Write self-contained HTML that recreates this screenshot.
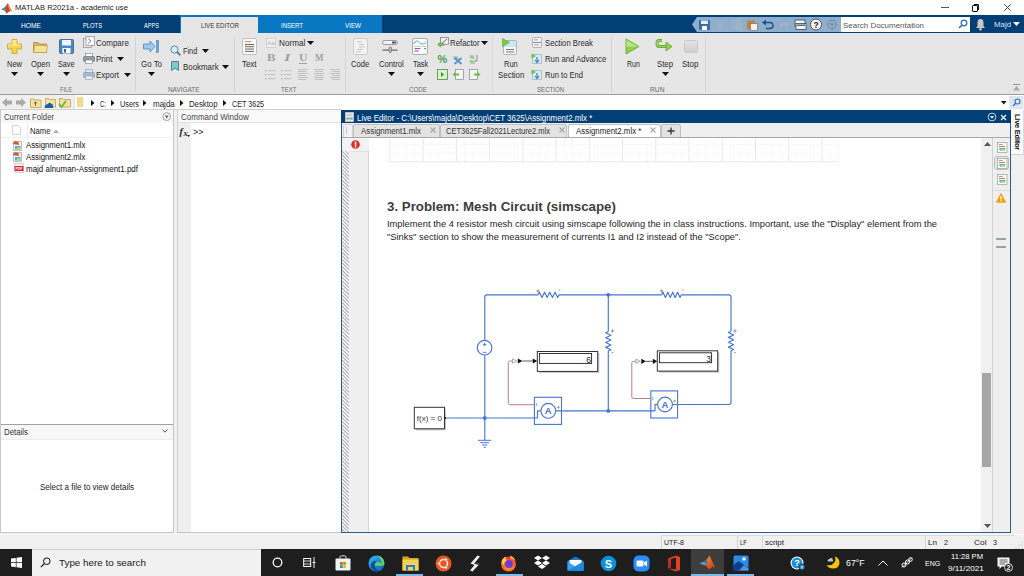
<!DOCTYPE html>
<html><head><meta charset="utf-8">
<style>
*{margin:0;padding:0;box-sizing:border-box}
html,body{width:1024px;height:576px;overflow:hidden;background:#f0f0f0;font-family:"Liberation Sans",sans-serif;color:#222;position:relative}
.a{position:absolute}
.t{position:absolute;white-space:nowrap;line-height:1}
svg{position:absolute;overflow:visible}
</style></head><body>
<!-- sec_top -->
<div class="a" style="left:0px;top:0px;width:1024px;height:15px;background:#fff;"></div>
<svg style="left:1px;top:2px" width="12" height="12" viewBox="0 0 12 12"><path d="M0.5 7.2 L4 5.2 L6.8 1 L11 9.8 L9.2 8.8 L5.5 11.8 L4 8.8 Z" fill="#c8452a"/><path d="M0.5 7.2 L4 5.2 L5.2 7.8 L4 8.8 Z" fill="#3a8fd0"/><path d="M6.8 1 L11 9.8 L9.2 8.8 L7.5 6 Z" fill="#f09a2a"/></svg>
<div class="t" style="left:15.00px;top:3.99px;font-size:7.8px;color:#1a1a1a;font-family:'Liberation Sans',sans-serif;transform:scaleX(0.981);transform-origin:0 0;">MATLAB R2021a - academic use</div>
<div class="a" style="left:941px;top:7px;width:7.5px;height:0.9px;background:#555;"></div>
<div class="a" style="left:972px;top:5.3px;width:6.3px;height:6.3px;border:1.3px solid #111;border-radius:1px"></div>
<div class="a" style="left:973.8px;top:4px;width:5.5px;height:5.8px;border-top:1.2px solid #111;border-right:1.2px solid #111;border-radius:0 1.5px 0 0"></div>
<svg style="left:1003.5px;top:3.8px" width="7" height="7" viewBox="0 0 7 7"><path d="M0.3 0.3 L6.7 6.7 M6.7 0.3 L0.3 6.7" stroke="#333" stroke-width="0.9"/></svg>
<div class="a" style="left:0px;top:15px;width:1024px;height:18px;background:#023f76;"></div>
<div class="a" style="left:259px;top:15px;width:123px;height:18px;background:#0a77c3;"></div>
<div class="a" style="left:180px;top:15px;width:79px;height:18px;background:#0a77c3;"></div>
<div class="a" style="left:181px;top:17px;width:77px;height:16px;background:#e6e6e6;"></div>
<div class="t" style="left:21.00px;top:21.85px;font-size:7px;color:#fff;font-family:'Liberation Sans',sans-serif;transform:scaleX(0.952);transform-origin:0 0;">HOME</div>
<div class="t" style="left:83.00px;top:21.85px;font-size:7px;color:#fff;font-family:'Liberation Sans',sans-serif;transform:scaleX(0.828);transform-origin:0 0;">PLOTS</div>
<div class="t" style="left:144.00px;top:21.85px;font-size:7px;color:#fff;font-family:'Liberation Sans',sans-serif;transform:scaleX(0.803);transform-origin:0 0;">APPS</div>
<div class="t" style="left:201.00px;top:21.85px;font-size:7px;color:#333;font-family:'Liberation Sans',sans-serif;transform:scaleX(0.875);transform-origin:0 0;">LIVE EDITOR</div>
<div class="t" style="left:281.00px;top:21.85px;font-size:7px;color:#fff;font-family:'Liberation Sans',sans-serif;transform:scaleX(0.861);transform-origin:0 0;">INSERT</div>
<div class="t" style="left:345.00px;top:21.85px;font-size:7px;color:#fff;font-family:'Liberation Sans',sans-serif;transform:scaleX(0.894);transform-origin:0 0;">VIEW</div>
<svg style="left:692px;top:17px" width="149" height="15" viewBox="0 0 149 15"><path d="M5 0 H149 V15 H5 L0 7.5 Z" fill="#8eaecb"/>
<rect x="7" y="3" width="11" height="10" rx="1" fill="#3a6ea8"/><rect x="9" y="3.5" width="7" height="3.5" fill="#e8eef5"/><rect x="10" y="9" width="5" height="4" fill="#fff"/>
<path d="M25 3 L29 10 M31 3 L27 10" stroke="#a3b6c8" stroke-width="0.9"/><circle cx="26.5" cy="11.5" r="1.4" fill="none" stroke="#a3b6c8" stroke-width="0.9"/><circle cx="29.5" cy="11.5" r="1.4" fill="none" stroke="#a3b6c8" stroke-width="0.9"/>
<rect x="41" y="3" width="6" height="7" fill="none" stroke="#a3b6c8" stroke-width="0.9"/><rect x="44" y="6" width="6" height="7" fill="#9fb3c6" stroke="#a3b6c8" stroke-width="0.9"/>
<rect x="55" y="3.5" width="8" height="9" fill="#c2843a"/><rect x="58.5" y="6.5" width="7" height="7" fill="#f2f2f2" stroke="#666" stroke-width="0.6"/>
<path d="M73 5.5 H78 Q81 5.5 81 8.5 Q81 11.5 78 11.5 H74" stroke="#1f4f8a" stroke-width="1.4" fill="none"/><path d="M70 5.5 L74 2.5 V8.5 Z" fill="#1f4f8a"/>
<path d="M88 11.5 Q88 7 92 7 H94" stroke="#a3b6c8" stroke-width="1.3" fill="none"/><path d="M97 7 L93.5 4 V10 Z" fill="#a3b6c8"/>
<rect x="103" y="3" width="10" height="6" fill="#f4f4f4" stroke="#444" stroke-width="0.8"/><rect x="104" y="6.5" width="10" height="6" fill="#f4f4f4" stroke="#444" stroke-width="0.8"/><rect x="105" y="7.5" width="8" height="1.5" fill="#3a6ea8"/>
<circle cx="124" cy="7.5" r="5.5" fill="#f4f4f4" stroke="#333" stroke-width="0.8"/><text x="124" y="10.8" font-size="8.5" font-weight="bold" text-anchor="middle" fill="#222" font-family="Liberation Sans">?</text>
<circle cx="140" cy="7.5" r="4.2" fill="none" stroke="#6d8299" stroke-width="1"/><path d="M137.9 6.4 H142.1 L140 8.9 Z" fill="#6d8299"/>
</svg>
<div class="a" style="left:841px;top:17px;width:129px;height:15px;background:#fff;"></div>
<div class="t" style="left:843.00px;top:21.52px;font-size:7.3px;color:#555;font-family:'Liberation Sans',sans-serif;transform:scaleX(1.091);transform-origin:0 0;">Search Documentation</div>
<svg style="left:958px;top:19px" width="10" height="10" viewBox="0 0 10 10"><circle cx="6" cy="4" r="2.8" fill="none" stroke="#2e6cc0" stroke-width="1.3"/><path d="M4 6 L1 9" stroke="#2e6cc0" stroke-width="1.6"/></svg>
<svg style="left:975px;top:18px" width="11" height="13" viewBox="0 0 11 13"><path d="M5.5 1 C3 1 2.5 3 2.5 5 V8 L1 10 H10 L8.5 8 V5 C8.5 3 8 1 5.5 1 Z" fill="#c7c7c7"/><circle cx="5.5" cy="11.3" r="1.3" fill="#c7c7c7"/></svg>
<div class="t" style="left:994.00px;top:20.90px;font-size:8px;color:#d6e4f4;font-family:'Liberation Sans',sans-serif;transform:scaleX(0.980);transform-origin:0 0;">Majd</div>
<svg style="left:1013px;top:22px" width="7" height="5" viewBox="0 0 7 5"><path d="M0 0 H7 L3.5 4 Z" fill="#fff"/></svg>
<!-- sec_ribbon -->
<div class="a" style="left:0px;top:33px;width:1024px;height:61px;background:#e6e6e6;"></div>
<div class="a" style="left:0px;top:94px;width:1024px;height:1px;background:#9c9c9c;"></div>
<svg style="left:7px;top:39px" width="15" height="15" viewBox="0 0 15 15"><path d="M5 0.5 H10 V5 H14.5 V10 H10 V14.5 H5 V10 H0.5 V5 H5 Z" fill="#f5d34a" stroke="#c9a227" stroke-width="0.8"/><path d="M5.5 1 H9.5 V5.5 H14 V7 H1 V5.5 H5.5 Z" fill="#fbe98a"/></svg>
<svg style="left:33px;top:41px" width="15" height="12" viewBox="0 0 15 12"><path d="M0.5 1.5 H5 L6.5 3 H13.5 V11.5 H0.5 Z" fill="#d9b45a" stroke="#a8823a" stroke-width="0.7"/><path d="M1.5 4.5 H14.5 L13.5 11.5 H0.8 Z" fill="#f6e39a" stroke="#b8923a" stroke-width="0.6"/></svg>
<svg style="left:59px;top:39px" width="15" height="15" viewBox="0 0 15 15"><rect x="0.5" y="0.5" width="14" height="14" rx="1" fill="#4c86c4" stroke="#2d5f98" stroke-width="0.8"/><rect x="3" y="1" width="9" height="5.5" fill="#eef4fa"/><rect x="3.5" y="9" width="8" height="5.5" fill="#fff"/><rect x="5" y="10" width="2" height="3.5" fill="#2d5f98"/></svg>
<div class="t" style="left:7.00px;top:59.72px;font-size:8.3px;color:#2b2b2b;font-family:'Liberation Sans',sans-serif;transform:scaleX(0.903);transform-origin:0 0;">New</div>
<div class="t" style="left:31.00px;top:59.72px;font-size:8.3px;color:#2b2b2b;font-family:'Liberation Sans',sans-serif;transform:scaleX(0.936);transform-origin:0 0;">Open</div>
<div class="t" style="left:58.00px;top:59.72px;font-size:8.3px;color:#2b2b2b;font-family:'Liberation Sans',sans-serif;transform:scaleX(0.872);transform-origin:0 0;">Save</div>
<svg style="left:11.1px;top:72.4px" width="7" height="4" viewBox="0 0 7 4"><path d="M0 0 H7 L3.5 4 Z" fill="#111"/></svg>
<svg style="left:37.0px;top:72.4px" width="7" height="4" viewBox="0 0 7 4"><path d="M0 0 H7 L3.5 4 Z" fill="#111"/></svg>
<svg style="left:63.0px;top:72.4px" width="7" height="4" viewBox="0 0 7 4"><path d="M0 0 H7 L3.5 4 Z" fill="#111"/></svg>
<svg style="left:83px;top:36px" width="12" height="12" viewBox="0 0 12 12"><rect x="0.5" y="2.5" width="8" height="9" fill="#e9e9e9" stroke="#8a8a8a" stroke-width="0.7"/><rect x="3" y="0.5" width="8.5" height="9" fill="#f7f7f7" stroke="#8a8a8a" stroke-width="0.7"/><path d="M5 2.5 L8 5 L5 7.5" stroke="#6d6d6d" stroke-width="0.8" fill="none"/></svg>
<svg style="left:83px;top:53px" width="12" height="11" viewBox="0 0 12 11"><rect x="2.5" y="0.5" width="7" height="4" fill="#fff" stroke="#7d7d7d" stroke-width="0.6"/><rect x="0.5" y="3.5" width="11" height="5" rx="1" fill="#8f9aa5" stroke="#5f6a75" stroke-width="0.6"/><rect x="2.5" y="7" width="7" height="3.5" fill="#fff" stroke="#7d7d7d" stroke-width="0.6"/></svg>
<svg style="left:83px;top:69px" width="12" height="11" viewBox="0 0 12 11"><rect x="2.5" y="0.5" width="7" height="4" fill="#dfe8f1" stroke="#8a9fb5" stroke-width="0.6"/><rect x="0.5" y="3.5" width="11" height="5" rx="1" fill="#a9bccd" stroke="#7d93a8" stroke-width="0.6"/><rect x="2.5" y="7" width="7" height="3.5" fill="#e8eef4" stroke="#8a9fb5" stroke-width="0.6"/></svg>
<div class="t" style="left:96.40px;top:38.72px;font-size:8.3px;color:#2b2b2b;font-family:'Liberation Sans',sans-serif;transform:scaleX(0.964);transform-origin:0 0;">Compare</div>
<div class="t" style="left:96.40px;top:54.72px;font-size:8.3px;color:#2b2b2b;font-family:'Liberation Sans',sans-serif;transform:scaleX(0.961);transform-origin:0 0;">Print</div>
<svg style="left:116.5px;top:56.5px" width="7" height="4" viewBox="0 0 7 4"><path d="M0 0 H7 L3.5 4 Z" fill="#111"/></svg>
<div class="t" style="left:96.40px;top:70.72px;font-size:8.3px;color:#2b2b2b;font-family:'Liberation Sans',sans-serif;transform:scaleX(0.959);transform-origin:0 0;">Export</div>
<svg style="left:123.5px;top:72.5px" width="7" height="4" viewBox="0 0 7 4"><path d="M0 0 H7 L3.5 4 Z" fill="#111"/></svg>
<div class="t" style="left:60.00px;top:86.83px;font-size:6.5px;color:#6b6b6b;font-family:'Liberation Sans',sans-serif;transform:scaleX(0.874);transform-origin:0 0;">FILE</div>
<div class="a" style="left:135px;top:36px;width:1px;height:56px;background:#d4d4d4;"></div>
<svg style="left:143px;top:40px" width="17" height="13" viewBox="0 0 17 13"><path d="M0.5 4 H7 V1 L12 6.5 L7 12 V9 H0.5 Z" fill="#9ccbec" stroke="#4a86b8" stroke-width="0.8"/><rect x="13.5" y="0.5" width="2" height="12" fill="#6aa3d3" stroke="#4a86b8" stroke-width="0.6"/></svg>
<div class="t" style="left:141.00px;top:59.72px;font-size:8.3px;color:#2b2b2b;font-family:'Liberation Sans',sans-serif;transform:scaleX(0.955);transform-origin:0 0;">Go To</div>
<svg style="left:148.1px;top:72.4px" width="7" height="4" viewBox="0 0 7 4"><path d="M0 0 H7 L3.5 4 Z" fill="#111"/></svg>
<svg style="left:170px;top:45px" width="11" height="11" viewBox="0 0 11 11"><circle cx="4.5" cy="4.5" r="3.6" fill="#d8ecfa" stroke="#5e87ad" stroke-width="1"/><path d="M7 7 L10.3 10.3" stroke="#3d5f80" stroke-width="1.6"/></svg>
<div class="t" style="left:183.00px;top:47.22px;font-size:8.3px;color:#2b2b2b;font-family:'Liberation Sans',sans-serif;transform:scaleX(0.886);transform-origin:0 0;">Find</div>
<svg style="left:201.5px;top:48.5px" width="7" height="4" viewBox="0 0 7 4"><path d="M0 0 H7 L3.5 4 Z" fill="#111"/></svg>
<svg style="left:171px;top:61px" width="8" height="10" viewBox="0 0 8 10"><path d="M0.5 0.5 H7.5 V9.5 L4 7 L0.5 9.5 Z" fill="#7cc9cf" stroke="#3e6e78" stroke-width="0.8"/></svg>
<div class="t" style="left:183.30px;top:62.92px;font-size:8.3px;color:#2b2b2b;font-family:'Liberation Sans',sans-serif;transform:scaleX(0.953);transform-origin:0 0;">Bookmark</div>
<svg style="left:222.2px;top:64.5px" width="7" height="4" viewBox="0 0 7 4"><path d="M0 0 H7 L3.5 4 Z" fill="#111"/></svg>
<div class="t" style="left:167.60px;top:86.83px;font-size:6.5px;color:#6b6b6b;font-family:'Liberation Sans',sans-serif;transform:scaleX(0.984);transform-origin:0 0;">NAVIGATE</div>
<div class="a" style="left:234px;top:36px;width:1px;height:56px;background:#d4d4d4;"></div>
<svg style="left:242px;top:38px" width="15" height="17" viewBox="0 0 15 17"><rect x="0.5" y="0.5" width="14" height="16" rx="1.5" fill="#fbfbfb" stroke="#b5b5b5" stroke-width="0.8"/><rect x="3" y="3" width="6" height="1.2" fill="#e8906a"/><rect x="3" y="6" width="9" height="0.9" fill="#555"/><rect x="3" y="8.3" width="9" height="0.9" fill="#555"/><rect x="3" y="10.6" width="9" height="0.9" fill="#555"/><rect x="3" y="12.9" width="9" height="0.9" fill="#555"/></svg>
<div class="t" style="left:242.00px;top:59.72px;font-size:8.3px;color:#2b2b2b;font-family:'Liberation Sans',sans-serif;transform:scaleX(0.953);transform-origin:0 0;">Text</div>
<svg style="left:266px;top:38px" width="10" height="10" viewBox="0 0 10 10"><rect x="0.5" y="0.5" width="9" height="9" fill="#f2f2f2" stroke="#c8c8c8" stroke-width="0.7"/><text x="5" y="7.3" font-size="6" text-anchor="middle" fill="#b0b0b0" font-family="Liberation Sans">Aa</text></svg>
<div class="t" style="left:279.00px;top:38.72px;font-size:8.3px;color:#2b2b2b;font-family:'Liberation Sans',sans-serif;transform:scaleX(0.983);transform-origin:0 0;">Normal</div>
<svg style="left:306.9px;top:41.0px" width="7" height="4" viewBox="0 0 7 4"><path d="M0 0 H7 L3.5 4 Z" fill="#111"/></svg>
<div class="t" style="left:267.00px;top:53.43px;font-size:10.5px;color:#a2a2a2;font-family:'Liberation Serif',sans-serif;font-weight:bold;transform:scaleX(1.214);transform-origin:0 0;">B</div>
<div class="t" style="left:284.00px;top:53.43px;font-size:10.5px;color:#a2a2a2;font-family:'Liberation Serif',sans-serif;font-weight:bold;font-style:italic;transform:scaleX(1.590);transform-origin:0 0;">I</div>
<div class="t" style="left:299.00px;top:53.43px;font-size:10.5px;color:#a2a2a2;font-family:'Liberation Serif',sans-serif;font-weight:bold;transform:scaleX(1.121);transform-origin:0 0;">U</div>
<div class="a" style="left:299px;top:63.2px;width:8px;height:0.9px;background:#a2a2a2;"></div>
<div class="t" style="left:314.50px;top:53.43px;font-size:10.5px;color:#a2a2a2;font-family:'Liberation Serif',sans-serif;font-weight:bold;transform:scaleX(0.858);transform-origin:0 0;">M</div>
<svg style="left:0;top:0" width="1" height="1"><rect x="265" y="70" width="1.5" height="1.5" fill="#bdbdbd"/><rect x="268" y="70.2" width="7.5" height="1" fill="#bdbdbd"/><rect x="265" y="74" width="1.5" height="1.5" fill="#bdbdbd"/><rect x="268" y="74.2" width="7.5" height="1" fill="#bdbdbd"/><rect x="265" y="78" width="1.5" height="1.5" fill="#bdbdbd"/><rect x="268" y="78.2" width="7.5" height="1" fill="#bdbdbd"/><rect x="281" y="70" width="1.5" height="1.5" fill="#bdbdbd"/><rect x="284" y="70.2" width="7.5" height="1" fill="#bdbdbd"/><rect x="281" y="74" width="1.5" height="1.5" fill="#bdbdbd"/><rect x="284" y="74.2" width="7.5" height="1" fill="#bdbdbd"/><rect x="281" y="78" width="1.5" height="1.5" fill="#bdbdbd"/><rect x="284" y="78.2" width="7.5" height="1" fill="#bdbdbd"/><rect x="298" y="69" width="10" height="0.9" fill="#bdbdbd"/><rect x="298" y="71" width="8" height="0.9" fill="#bdbdbd"/><rect x="298" y="73" width="10" height="0.9" fill="#bdbdbd"/><rect x="298" y="75" width="8" height="0.9" fill="#bdbdbd"/><rect x="298" y="77" width="10" height="0.9" fill="#bdbdbd"/><rect x="298" y="79" width="8" height="0.9" fill="#bdbdbd"/><rect x="314" y="69" width="10" height="0.9" fill="#bdbdbd"/><rect x="315" y="71" width="8" height="0.9" fill="#bdbdbd"/><rect x="314" y="73" width="10" height="0.9" fill="#bdbdbd"/><rect x="315" y="75" width="8" height="0.9" fill="#bdbdbd"/><rect x="314" y="77" width="10" height="0.9" fill="#bdbdbd"/><rect x="315" y="79" width="8" height="0.9" fill="#bdbdbd"/><rect x="330" y="69" width="10" height="0.9" fill="#bdbdbd"/><rect x="332" y="71" width="8" height="0.9" fill="#bdbdbd"/><rect x="330" y="73" width="10" height="0.9" fill="#bdbdbd"/><rect x="332" y="75" width="8" height="0.9" fill="#bdbdbd"/><rect x="330" y="77" width="10" height="0.9" fill="#bdbdbd"/><rect x="332" y="79" width="8" height="0.9" fill="#bdbdbd"/></svg>
<div class="t" style="left:281.00px;top:86.83px;font-size:6.5px;color:#6b6b6b;font-family:'Liberation Sans',sans-serif;transform:scaleX(0.921);transform-origin:0 0;">TEXT</div>
<div class="a" style="left:345px;top:36px;width:1px;height:56px;background:#d4d4d4;"></div>
<svg style="left:353px;top:38px" width="15" height="17" viewBox="0 0 15 17"><rect x="0.5" y="0.5" width="14" height="16" rx="1.5" fill="#f2f2f2" stroke="#c5c5c5" stroke-width="0.8"/><rect x="4" y="3.5" width="5" height="0.8" fill="#c0c0c0"/><rect x="6" y="6" width="5" height="0.8" fill="#c0c0c0"/><rect x="6" y="8.5" width="6" height="0.8" fill="#c0c0c0"/><rect x="4" y="11" width="6" height="0.8" fill="#c0c0c0"/><rect x="3" y="13.5" width="5" height="0.8" fill="#c0c0c0"/></svg>
<div class="t" style="left:351.40px;top:59.72px;font-size:8.3px;color:#2b2b2b;font-family:'Liberation Sans',sans-serif;transform:scaleX(0.927);transform-origin:0 0;">Code</div>
<svg style="left:382px;top:40px" width="16" height="13" viewBox="0 0 16 13"><rect x="0.5" y="0.5" width="15" height="4" rx="2" fill="#f4f4f4" stroke="#777" stroke-width="0.7"/><rect x="10" y="1.5" width="4" height="2" fill="#555"/><rect x="0.5" y="9.5" width="15" height="1.2" fill="#666"/><rect x="7" y="7" width="2.5" height="5.5" rx="1" fill="#bbb" stroke="#666" stroke-width="0.6"/></svg>
<div class="t" style="left:378.50px;top:59.72px;font-size:8.3px;color:#2b2b2b;font-family:'Liberation Sans',sans-serif;transform:scaleX(0.927);transform-origin:0 0;">Control</div>
<svg style="left:387.5px;top:72.4px" width="7" height="4" viewBox="0 0 7 4"><path d="M0 0 H7 L3.5 4 Z" fill="#111"/></svg>
<svg style="left:412px;top:38px" width="16" height="17" viewBox="0 0 16 17"><rect x="0.5" y="0.5" width="15" height="16" rx="1.5" fill="#fafafa" stroke="#999" stroke-width="0.8"/><path d="M1.5 6 Q4 1 7.5 4.5 T14.5 4" stroke="#4aa5d8" stroke-width="0.9" fill="none"/><rect x="1.5" y="8" width="13" height="0.7" fill="#bbb"/><rect x="2.5" y="10" width="6" height="1.2" fill="#9a5fb8"/><rect x="12" y="10" width="2" height="1.2" fill="#4caf50"/><rect x="2.5" y="12.5" width="4" height="1.2" fill="#9a5fb8"/></svg>
<div class="t" style="left:412.80px;top:59.72px;font-size:8.3px;color:#2b2b2b;font-family:'Liberation Sans',sans-serif;transform:scaleX(0.891);transform-origin:0 0;">Task</div>
<svg style="left:416.5px;top:72.4px" width="7" height="4" viewBox="0 0 7 4"><path d="M0 0 H7 L3.5 4 Z" fill="#111"/></svg>
<svg style="left:437px;top:37px" width="12" height="11" viewBox="0 0 12 11"><rect x="3.5" y="0.5" width="8" height="7" fill="#eee" stroke="#777" stroke-width="0.7"/><path d="M5 6 L10 2" stroke="#555" stroke-width="0.8"/><path d="M0.5 7.5 L3.5 5 V6.5 H7 V8.5 H3.5 V10 Z" fill="#7dc15a" stroke="#4d8f35" stroke-width="0.5"/></svg>
<div class="t" style="left:450.40px;top:38.72px;font-size:8.3px;color:#2b2b2b;font-family:'Liberation Sans',sans-serif;transform:scaleX(0.941);transform-origin:0 0;">Refactor</div>
<svg style="left:481.0px;top:41.0px" width="7" height="4" viewBox="0 0 7 4"><path d="M0 0 H7 L3.5 4 Z" fill="#111"/></svg>
<svg style="left:436px;top:53px" width="46" height="28" viewBox="0 0 46 28">
<text x="6.5" y="9.5" font-size="11" font-weight="bold" text-anchor="middle" fill="#4aa04a" font-family="Liberation Sans">%</text>
<text x="20" y="6.5" font-size="6" font-weight="bold" text-anchor="middle" fill="#6db36d" font-family="Liberation Sans">%</text><path d="M18.5 5 L25.5 11 M25.5 5 L18.5 11" stroke="#5a8fd0" stroke-width="1.8"/>
<text x="36" y="5.5" font-size="5.5" font-weight="bold" text-anchor="middle" fill="#6db36d" font-family="Liberation Sans">%</text><text x="36" y="10.5" font-size="5.5" font-weight="bold" text-anchor="middle" fill="#6db36d" font-family="Liberation Sans">%</text><path d="M41 2 V8 H38" stroke="#777" stroke-width="0.8" fill="none"/>
<rect x="1.5" y="16.5" width="10" height="10" fill="#dff0cf" stroke="#55a04a" stroke-width="0.9"/><path d="M5 19 L8 21.5 L5 24 Z" fill="#3a8f3a"/>
<rect x="19.5" y="16.5" width="8" height="10" fill="#f4f4f4" stroke="#888" stroke-width="0.7"/><path d="M16.5 21.5 L19.5 19 V20.5 H23 V22.5 H19.5 V24 Z" fill="#6dbb4a"/>
<rect x="33.5" y="16.5" width="8" height="10" fill="#f4f4f4" stroke="#888" stroke-width="0.7"/><path d="M44.5 21.5 L41.5 19 V20.5 H38 V22.5 H41.5 V24 Z" fill="#6dbb4a"/>
</svg>
<div class="t" style="left:408.70px;top:86.83px;font-size:6.5px;color:#6b6b6b;font-family:'Liberation Sans',sans-serif;transform:scaleX(0.948);transform-origin:0 0;">CODE</div>
<div class="a" style="left:492px;top:36px;width:1px;height:56px;background:#dadada;"></div>
<svg style="left:502px;top:38px" width="15" height="17" viewBox="0 0 15 17"><rect x="1.5" y="2.5" width="13" height="14" rx="1.5" fill="#f6f6f6" stroke="#a5a5a5" stroke-width="0.8"/><rect x="2" y="3" width="12" height="6" fill="#cfe6f5"/><rect x="4" y="11" width="8" height="0.9" fill="#666"/><rect x="4" y="13.5" width="8" height="0.9" fill="#666"/><path d="M0.5 0.5 L7.5 4.5 L0.5 8.5 Z" fill="#7ccf3c" stroke="#4c9a25" stroke-width="0.5"/></svg>
<div class="t" style="left:503.70px;top:59.72px;font-size:8.3px;color:#2b2b2b;font-family:'Liberation Sans',sans-serif;transform:scaleX(0.900);transform-origin:0 0;">Run</div>
<div class="t" style="left:497.50px;top:70.62px;font-size:8.3px;color:#2b2b2b;font-family:'Liberation Sans',sans-serif;transform:scaleX(0.954);transform-origin:0 0;">Section</div>
<svg style="left:532px;top:37px" width="10" height="11" viewBox="0 0 10 11"><rect x="0.5" y="0.5" width="9" height="10" rx="1" fill="#f4f4f4" stroke="#999" stroke-width="0.7"/><rect x="2" y="2.5" width="4" height="0.8" fill="#888"/><rect x="1" y="5" width="8" height="0.8" fill="#777"/><rect x="2" y="7.5" width="5" height="0.8" fill="#888"/></svg>
<svg style="left:531px;top:53px" width="11" height="11" viewBox="0 0 11 11"><rect x="1.5" y="1.5" width="9" height="9" fill="#dce9f4" stroke="#8aa" stroke-width="0.6"/><path d="M6 4 V9 M4 7 L6 9.5 L8 7" stroke="#3a86c8" stroke-width="1.2" fill="none"/><path d="M0.5 0.5 L5 3 L0.5 5.5 Z" fill="#6cc43a"/></svg>
<svg style="left:531px;top:69px" width="11" height="11" viewBox="0 0 11 11"><rect x="1.5" y="1.5" width="9" height="9" fill="#dce9f4" stroke="#8aa" stroke-width="0.6"/><path d="M6 4 V9 M4 7 L6 9.5 L8 7" stroke="#3a86c8" stroke-width="1.2" fill="none"/><path d="M0.5 0.5 L5 3 L0.5 5.5 Z" fill="#6cc43a"/></svg>
<div class="t" style="left:544.70px;top:38.72px;font-size:8.3px;color:#2b2b2b;font-family:'Liberation Sans',sans-serif;transform:scaleX(0.927);transform-origin:0 0;">Section Break</div>
<div class="t" style="left:544.70px;top:54.72px;font-size:8.3px;color:#2b2b2b;font-family:'Liberation Sans',sans-serif;transform:scaleX(0.936);transform-origin:0 0;">Run and Advance</div>
<div class="t" style="left:544.70px;top:70.72px;font-size:8.3px;color:#2b2b2b;font-family:'Liberation Sans',sans-serif;transform:scaleX(0.915);transform-origin:0 0;">Run to End</div>
<div class="t" style="left:536.80px;top:86.83px;font-size:6.5px;color:#6b6b6b;font-family:'Liberation Sans',sans-serif;transform:scaleX(0.941);transform-origin:0 0;">SECTION</div>
<div class="a" style="left:611px;top:36px;width:1px;height:56px;background:#d4d4d4;"></div>
<svg style="left:625px;top:38px" width="15" height="17" viewBox="0 0 15 17"><path d="M1 1 L14 8.5 L1 16 Z" fill="#8fd14f" stroke="#5ea52e" stroke-width="0.8"/><path d="M1.5 2 L13 8.5 L1.5 9 Z" fill="#b6e57f"/></svg>
<div class="t" style="left:626.60px;top:59.72px;font-size:8.3px;color:#2b2b2b;font-family:'Liberation Sans',sans-serif;transform:scaleX(0.847);transform-origin:0 0;">Run</div>
<svg style="left:656px;top:39px" width="17" height="14" viewBox="0 0 17 14"><path d="M6 1.5 H3 Q1 1.5 1 4.5 Q1 7.5 3.5 7.5 H10" stroke="#5ea52e" stroke-width="3" fill="none"/><path d="M6 1.5 H3 Q1 1.5 1 4.5 Q1 7.5 3.5 7.5 H10" stroke="#9bd45e" stroke-width="1.6" fill="none"/><path d="M10 3 L16 7.5 L10 12 Z" fill="#8fd14f" stroke="#5ea52e" stroke-width="0.8"/></svg>
<div class="t" style="left:657.00px;top:59.72px;font-size:8.3px;color:#2b2b2b;font-family:'Liberation Sans',sans-serif;transform:scaleX(0.937);transform-origin:0 0;">Step</div>
<svg style="left:662.0px;top:72.4px" width="7" height="4" viewBox="0 0 7 4"><path d="M0 0 H7 L3.5 4 Z" fill="#111"/></svg>
<div class="a" style="left:684px;top:39.5px;width:13.5px;height:13px;background:linear-gradient(#e2e2e2,#cfcfcf);border:1px solid #c9c9c9;border-radius:1.5px"></div>
<div class="t" style="left:682.30px;top:59.72px;font-size:8.3px;color:#2b2b2b;font-family:'Liberation Sans',sans-serif;transform:scaleX(0.961);transform-origin:0 0;">Stop</div>
<div class="t" style="left:650.00px;top:86.83px;font-size:6.5px;color:#6b6b6b;font-family:'Liberation Sans',sans-serif;transform:scaleX(1.030);transform-origin:0 0;">RUN</div>
<div class="a" style="left:705px;top:36px;width:1px;height:56px;background:#d4d4d4;"></div>
<svg style="left:1012.8px;top:84.2px" width="7" height="7" viewBox="0 0 7 7"><rect x="0" y="0" width="7" height="0.9" fill="#8a8a8a"/><path d="M0 6.5 L3.5 2 L7 6.5 Z" fill="#a8a8a8"/></svg>
<!-- sec_panels -->
<div class="a" style="left:0px;top:95px;width:1024px;height:15px;background:#f0f0f0;"></div>
<div class="a" style="left:74px;top:95px;width:950px;height:14.5px;background:#fff;"></div>
<div class="a" style="left:74px;top:95px;width:1px;height:14.5px;background:#e0e0e0;"></div>
<svg style="left:0;top:95px" width="74" height="15" viewBox="0 0 74 15">
<path d="M2 7.5 L7 3 V5.5 H12 V9.5 H7 V12 Z" fill="#a9a9a9"/>
<path d="M26 7.5 L21 3 V5.5 H16 V9.5 H21 V12 Z" fill="#a9a9a9"/>
<path d="M30.5 4 H34 L35 5 H41 V12.5 H30.5 Z" fill="#f3e2a0" stroke="#b8953f" stroke-width="0.7"/><path d="M35.5 11 V7 M34 8.5 L35.5 6.8 L37 8.5" stroke="#333" stroke-width="0.7" fill="none"/>
<path d="M45.5 3.5 H49 L50 4.5 H55.5 V12 H45.5 Z" fill="#f3e2a0" stroke="#b8953f" stroke-width="0.7"/><path d="M44.5 13 Q44.5 9.5 48 9 Q49 7 51 8.5 Q53 8.5 53 11 V13 Z" fill="#1c5fa3"/>
<path d="M59.5 3.5 H63 L64 4.5 H70.5 V12 H59.5 Z" fill="#f3e2a0" stroke="#b8953f" stroke-width="0.7"/><path d="M59 9 L61.5 12 L66 6" stroke="#6cb33f" stroke-width="1.8" fill="none"/>
</svg>
<svg style="left:77px;top:97px" width="6" height="10" viewBox="0 0 6 10"><path d="M0.5 0.5 H5.5 V9.5 H0.5 Z" fill="#f6dc8a" stroke="#e3c56a" stroke-width="0.6"/></svg>
<svg style="left:91.0px;top:100px" width="4" height="6" viewBox="0 0 4 6"><path d="M0 0 L3.5 3 L0 6 Z" fill="#111"/></svg>
<svg style="left:111.2px;top:100px" width="4" height="6" viewBox="0 0 4 6"><path d="M0 0 L3.5 3 L0 6 Z" fill="#111"/></svg>
<svg style="left:142.9px;top:100px" width="4" height="6" viewBox="0 0 4 6"><path d="M0 0 L3.5 3 L0 6 Z" fill="#111"/></svg>
<svg style="left:180.1px;top:100px" width="4" height="6" viewBox="0 0 4 6"><path d="M0 0 L3.5 3 L0 6 Z" fill="#111"/></svg>
<svg style="left:223.0px;top:100px" width="4" height="6" viewBox="0 0 4 6"><path d="M0 0 L3.5 3 L0 6 Z" fill="#111"/></svg>
<div class="t" style="left:100.00px;top:99.97px;font-size:8.5px;color:#1e1e1e;font-family:'Liberation Sans',sans-serif;transform:scaleX(0.706);transform-origin:0 0;">C:</div>
<div class="t" style="left:120.00px;top:99.97px;font-size:8.5px;color:#1e1e1e;font-family:'Liberation Sans',sans-serif;transform:scaleX(0.856);transform-origin:0 0;">Users</div>
<div class="t" style="left:152.60px;top:99.97px;font-size:8.5px;color:#1e1e1e;font-family:'Liberation Sans',sans-serif;transform:scaleX(0.942);transform-origin:0 0;">majda</div>
<div class="t" style="left:189.00px;top:99.97px;font-size:8.5px;color:#1e1e1e;font-family:'Liberation Sans',sans-serif;transform:scaleX(0.914);transform-origin:0 0;">Desktop</div>
<div class="t" style="left:231.90px;top:99.97px;font-size:8.5px;color:#1e1e1e;font-family:'Liberation Sans',sans-serif;transform:scaleX(0.842);transform-origin:0 0;">CET 3625</div>
<svg style="left:1001px;top:101px" width="5.5" height="3.5" viewBox="0 0 5.5 3.5"><path d="M0 0 H5.5 L2.75 3.5 Z" fill="#111"/></svg>
<div class="a" style="left:1008.5px;top:95.8px;width:14px;height:13.5px;background:#dfe5ee;"></div>
<div class="a" style="left:1022.5px;top:95.8px;width:1.5px;height:13.5px;background:#f0f0f0;"></div>
<svg style="left:1011.5px;top:98px" width="9" height="9" viewBox="0 0 9 9"><circle cx="5.5" cy="3.5" r="2.5" fill="none" stroke="#2f6fc4" stroke-width="1.1"/><path d="M3.7 5.3 L1 8" stroke="#2f6fc4" stroke-width="1.3"/></svg>
<div class="a" style="left:0px;top:109.2px;width:341px;height:1px;background:#d0d0d0;"></div>
<div class="a" style="left:0px;top:110px;width:173px;height:12.5px;background:#f7f7f7;"></div>
<div class="a" style="left:0px;top:110px;width:1px;height:423px;background:#c8c8c8;"></div>
<div class="a" style="left:173px;top:110px;width:1px;height:423px;background:#c6c6c6;"></div>
<div class="t" style="left:4.00px;top:112.77px;font-size:8.5px;color:#444;font-family:'Liberation Sans',sans-serif;transform:scaleX(0.913);transform-origin:0 0;">Current Folder</div>
<svg style="left:162px;top:112px" width="10" height="10" viewBox="0 0 10 10"><circle cx="4.7" cy="4.6" r="3.9" fill="none" stroke="#8a8a8a" stroke-width="0.8"/><path d="M2.6 3.5 H6.8 L4.7 6.4 Z" fill="#666"/></svg>
<div class="a" style="left:1px;top:122.5px;width:172px;height:1px;background:#e6e6e6;"></div>
<div class="a" style="left:1px;top:123px;width:172px;height:14px;background:#fff;"></div>
<div class="a" style="left:1px;top:137.5px;width:172px;height:286.5px;background:#fff;"></div>
<div class="a" style="left:1px;top:439px;width:172px;height:93px;background:#fff;"></div>
<div class="a" style="left:1px;top:137px;width:172px;height:0.8px;background:#efefef;"></div>
<div class="a" style="left:27px;top:123px;width:0.8px;height:14px;background:#ececec;"></div>
<svg style="left:12px;top:125px" width="9" height="10" viewBox="0 0 9 10"><path d="M0.5 0.5 H6 L8.5 3 V9.5 H0.5 Z" fill="#fff" stroke="#c4c4c4" stroke-width="0.7"/></svg>
<div class="t" style="left:30.00px;top:127.37px;font-size:8.5px;color:#222;font-family:'Liberation Sans',sans-serif;transform:scaleX(0.904);transform-origin:0 0;">Name</div>
<svg style="left:52.5px;top:129px" width="6" height="4" viewBox="0 0 6 4"><path d="M0 4 L3 0.5 L6 4 Z" fill="#b0b0a0"/></svg>
<svg style="left:12px;top:139.5px" width="11" height="11" viewBox="0 0 11 11"><rect x="1.5" y="1.5" width="8" height="9" fill="#f0f0f0" stroke="#9a9a9a" stroke-width="0.6"/><path d="M0.5 4 L3.5 1 L5.5 2 L6 0.5 L7 5 L4 4.5 Z" fill="#d2582a"/><rect x="3" y="6" width="5.5" height="3.5" fill="#53b0d8"/><rect x="5" y="7.5" width="3.5" height="2" fill="#e6d23a"/></svg>
<div class="t" style="left:26.40px;top:141.48px;font-size:8.5px;color:#111;font-family:'Liberation Sans',sans-serif;transform:scaleX(0.916);transform-origin:0 0;">Assignment1.mlx</div>
<svg style="left:12px;top:151.3px" width="11" height="11" viewBox="0 0 11 11"><rect x="1.5" y="1.5" width="8" height="9" fill="#f0f0f0" stroke="#9a9a9a" stroke-width="0.6"/><path d="M0.5 4 L3.5 1 L5.5 2 L6 0.5 L7 5 L4 4.5 Z" fill="#d2582a"/><rect x="3" y="6" width="5.5" height="3.5" fill="#53b0d8"/><rect x="5" y="7.5" width="3.5" height="2" fill="#e6d23a"/></svg>
<div class="t" style="left:26.40px;top:153.28px;font-size:8.5px;color:#111;font-family:'Liberation Sans',sans-serif;transform:scaleX(0.916);transform-origin:0 0;">Assignment2.mlx</div>
<svg style="left:13.5px;top:163px" width="10" height="10" viewBox="0 0 10 10"><rect x="0.5" y="0.5" width="9" height="9" fill="#f4f4f4" stroke="#bbb" stroke-width="0.6"/><rect x="0.5" y="3" width="9" height="5" fill="#d9262b"/><text x="5" y="7" font-size="3.5" text-anchor="middle" fill="#fff" font-family="Liberation Sans" font-weight="bold">PDF</text></svg>
<div class="t" style="left:26.40px;top:164.68px;font-size:8.5px;color:#111;font-family:'Liberation Sans',sans-serif;transform:scaleX(0.937);transform-origin:0 0;">majd alnuman-Assignment1.pdf</div>
<div class="a" style="left:1px;top:424px;width:172px;height:1.2px;background:#a0a0a0;"></div>
<div class="a" style="left:1px;top:425px;width:172px;height:13.5px;background:#f7f7f7;"></div>
<div class="a" style="left:1px;top:438.5px;width:172px;height:0.8px;background:#ececec;"></div>
<div class="t" style="left:4.00px;top:427.68px;font-size:8.5px;color:#333;font-family:'Liberation Sans',sans-serif;transform:scaleX(0.924);transform-origin:0 0;">Details</div>
<svg style="left:161.5px;top:429px" width="6" height="4" viewBox="0 0 6 4"><path d="M0.5 0.5 L3 3.2 L5.5 0.5" stroke="#555" stroke-width="1" fill="none"/></svg>
<div class="t" style="left:40.00px;top:482.68px;font-size:8.5px;color:#222;font-family:'Liberation Sans',sans-serif;transform:scaleX(0.943);transform-origin:0 0;">Select a file to view details</div>
<div class="a" style="left:0px;top:532px;width:174px;height:1px;background:#c4c4c4;"></div>
<div class="a" style="left:177px;top:110px;width:1px;height:423px;background:#cfcfcf;"></div>
<div class="a" style="left:178px;top:110px;width:163px;height:12px;background:#f9f9f9;"></div>
<div class="a" style="left:178px;top:122px;width:163px;height:0.8px;background:#e4e4e4;"></div>
<div class="t" style="left:180.60px;top:112.77px;font-size:8.5px;color:#444;font-family:'Liberation Sans',sans-serif;transform:scaleX(0.943);transform-origin:0 0;">Command Window</div>
<div class="a" style="left:178px;top:122.8px;width:163px;height:410px;background:#fff;"></div>
<div class="a" style="left:178px;top:122.8px;width:12.7px;height:410px;background:#efefef;"></div>
<div class="t" style="left:179.50px;top:127.00px;font-size:10px;color:#222;font-family:'Liberation Serif',sans-serif;font-weight:bold;font-style:italic;">f</div>
<div class="t" style="left:183.50px;top:128.68px;font-size:8.5px;color:#222;font-family:'Liberation Serif',sans-serif;font-weight:bold;font-style:italic;">x</div>
<svg style="left:186.5px;top:135px" width="3" height="2" viewBox="0 0 3 2"><path d="M0 0 H3 L1.5 2 Z" fill="#222"/></svg>
<div class="t" style="left:193.00px;top:128.18px;font-size:8.5px;color:#222;font-family:'Liberation Sans',sans-serif;transform:scaleX(1.058);transform-origin:0 0;">&gt;&gt;</div>
<div class="a" style="left:177px;top:532px;width:165px;height:1px;background:#c4c4c4;"></div>
<!-- sec_editor -->
<div class="a" style="left:341px;top:110px;width:670px;height:423px;background:#fff;"></div>
<div class="a" style="left:341px;top:110px;width:1.2px;height:423px;background:#2d5c96;"></div>
<div class="a" style="left:1010px;top:110px;width:1.2px;height:423px;background:#2d5c96;"></div>
<div class="a" style="left:341px;top:532px;width:670px;height:1.2px;background:#2d5c96;"></div>
<div class="a" style="left:341px;top:110px;width:670px;height:12.6px;background:#023f76;"></div>
<svg style="left:344.5px;top:111.5px" width="9" height="10" viewBox="0 0 9 10"><rect x="0.3" y="0.3" width="8.4" height="9.4" fill="#f2f2f2" stroke="#c7c7c7" stroke-width="0.5"/><rect x="1.5" y="1.8" width="6" height="0.6" fill="#aaa"/><rect x="1.5" y="3.2" width="6" height="0.6" fill="#aaa"/><rect x="1.2" y="5.5" width="6.6" height="2.2" fill="#5fb0e0"/><rect x="2.5" y="6.8" width="3.5" height="1.6" fill="#e6d23a"/></svg>
<div class="t" style="left:356.70px;top:113.77px;font-size:8.5px;color:#ffffff;font-family:'Liberation Sans',sans-serif;transform:scaleX(0.930);transform-origin:0 0;">Live Editor - C:\Users\majda\Desktop\CET 3625\Assignment2.mlx *</div>
<svg style="left:987px;top:112px" width="10" height="10" viewBox="0 0 10 10"><circle cx="5" cy="5" r="3.9" fill="none" stroke="#d0dcea" stroke-width="0.9"/><path d="M2.9 4 H7.1 L5 6.8 Z" fill="#e8eef6"/></svg>
<svg style="left:999.5px;top:113.5px" width="7" height="7" viewBox="0 0 7 7"><path d="M1 1 L6 6 M6 1 L1 6" stroke="#fff" stroke-width="1.1"/></svg>
<div class="a" style="left:342px;top:122.6px;width:668px;height:14.6px;background:#efefef;"></div>
<div class="a" style="left:342px;top:137px;width:668px;height:1px;background:#a8a8a8;"></div>
<div class="a" style="left:342.5px;top:123.5px;width:10px;height:13.5px;background:#f2f2f2;border:1px solid #d2d2d2;border-bottom:none;border-radius:2px 2px 0 0"></div>
<div class="a" style="left:345.5px;top:127px;width:0.8px;height:7px;background:#c9c9c9;"></div>
<div class="a" style="left:352.6px;top:123.5px;width:87.89999999999998px;height:13.5px;background:#e3e3e3;border:1px solid #c0c0c0;border-bottom:none;border-radius:2.5px 2.5px 0 0"></div>
<div class="t" style="left:361.00px;top:127.17px;font-size:8.5px;color:#333;font-family:'Liberation Sans',sans-serif;transform:scaleX(0.927);transform-origin:0 0;">Assignment1.mlx</div>
<svg style="left:429.8px;top:127px" width="6" height="6" viewBox="0 0 6 6"><path d="M0.5 0.5 L5.5 5.5 M5.5 0.5 L0.5 5.5" stroke="#a5a5a5" stroke-width="1.1"/></svg>
<div class="a" style="left:440.3px;top:123.5px;width:127.19999999999999px;height:13.5px;background:#e3e3e3;border:1px solid #c0c0c0;border-bottom:none;border-radius:2.5px 2.5px 0 0"></div>
<div class="t" style="left:446.40px;top:127.17px;font-size:8.5px;color:#333;font-family:'Liberation Sans',sans-serif;transform:scaleX(0.887);transform-origin:0 0;">CET3625Fall2021Lecture2.mlx</div>
<svg style="left:559px;top:127px" width="6" height="6" viewBox="0 0 6 6"><path d="M0.5 0.5 L5.5 5.5 M5.5 0.5 L0.5 5.5" stroke="#a5a5a5" stroke-width="1.1"/></svg>
<div class="a" style="left:567.5px;top:123.5px;width:93.0px;height:14.5px;background:#ffffff;border:1px solid #c0c0c0;border-bottom:none;border-radius:2.5px 2.5px 0 0"></div>
<div class="t" style="left:576.00px;top:127.17px;font-size:8.5px;color:#222;font-family:'Liberation Sans',sans-serif;transform:scaleX(0.929);transform-origin:0 0;">Assignment2.mlx *</div>
<svg style="left:650px;top:127px" width="6" height="6" viewBox="0 0 6 6"><path d="M0.5 0.5 L5.5 5.5 M5.5 0.5 L0.5 5.5" stroke="#a5a5a5" stroke-width="1.1"/></svg>
<div class="a" style="left:660.5px;top:123.5px;width:20px;height:13.5px;background:#e3e3e3;border:1px solid #c0c0c0;border-bottom:none;border-radius:2.5px 2.5px 0 0"></div>
<svg style="left:666.5px;top:126.5px" width="8" height="8" viewBox="0 0 8 8"><path d="M4 0.5 V7.5 M0.5 4 H7.5" stroke="#333" stroke-width="1.3"/></svg>
<div class="a" style="left:342px;top:138px;width:26.6px;height:394px;background:#efefef;"></div>
<div class="a" style="left:368px;top:138px;width:0.8px;height:394px;background:#d6d6d6;"></div>
<div class="a" style="left:342px;top:138px;width:26.6px;height:13px;background:#f2f2f2;"></div>
<div class="a" style="left:342px;top:151px;width:26px;height:0.6px;background:#e2e2e2;"></div>
<div class="a" style="left:342px;top:151px;width:7.3px;height:381px;background:#fff;overflow:hidden"><svg style="left:0;top:0" width="8" height="381" viewBox="0 0 8 381"><path d="M0 -7.0 L7 0.0" stroke="#b3b3b3" stroke-width="1.25"/><path d="M0 -3.4 L7 3.6" stroke="#b3b3b3" stroke-width="1.25"/><path d="M0 0.20000000000000018 L7 7.2" stroke="#b3b3b3" stroke-width="1.25"/><path d="M0 3.8000000000000007 L7 10.8" stroke="#b3b3b3" stroke-width="1.25"/><path d="M0 7.4 L7 14.4" stroke="#b3b3b3" stroke-width="1.25"/><path d="M0 11.0 L7 18.0" stroke="#b3b3b3" stroke-width="1.25"/><path d="M0 14.600000000000001 L7 21.6" stroke="#b3b3b3" stroke-width="1.25"/><path d="M0 18.2 L7 25.2" stroke="#b3b3b3" stroke-width="1.25"/><path d="M0 21.8 L7 28.8" stroke="#b3b3b3" stroke-width="1.25"/><path d="M0 25.4 L7 32.4" stroke="#b3b3b3" stroke-width="1.25"/><path d="M0 29.0 L7 36.0" stroke="#b3b3b3" stroke-width="1.25"/><path d="M0 32.6 L7 39.6" stroke="#b3b3b3" stroke-width="1.25"/><path d="M0 36.2 L7 43.2" stroke="#b3b3b3" stroke-width="1.25"/><path d="M0 39.800000000000004 L7 46.800000000000004" stroke="#b3b3b3" stroke-width="1.25"/><path d="M0 43.4 L7 50.4" stroke="#b3b3b3" stroke-width="1.25"/><path d="M0 47.0 L7 54.0" stroke="#b3b3b3" stroke-width="1.25"/><path d="M0 50.6 L7 57.6" stroke="#b3b3b3" stroke-width="1.25"/><path d="M0 54.2 L7 61.2" stroke="#b3b3b3" stroke-width="1.25"/><path d="M0 57.8 L7 64.8" stroke="#b3b3b3" stroke-width="1.25"/><path d="M0 61.400000000000006 L7 68.4" stroke="#b3b3b3" stroke-width="1.25"/><path d="M0 65.0 L7 72.0" stroke="#b3b3b3" stroke-width="1.25"/><path d="M0 68.60000000000001 L7 75.60000000000001" stroke="#b3b3b3" stroke-width="1.25"/><path d="M0 72.2 L7 79.2" stroke="#b3b3b3" stroke-width="1.25"/><path d="M0 75.8 L7 82.8" stroke="#b3b3b3" stroke-width="1.25"/><path d="M0 79.4 L7 86.4" stroke="#b3b3b3" stroke-width="1.25"/><path d="M0 83.0 L7 90.0" stroke="#b3b3b3" stroke-width="1.25"/><path d="M0 86.60000000000001 L7 93.60000000000001" stroke="#b3b3b3" stroke-width="1.25"/><path d="M0 90.2 L7 97.2" stroke="#b3b3b3" stroke-width="1.25"/><path d="M0 93.8 L7 100.8" stroke="#b3b3b3" stroke-width="1.25"/><path d="M0 97.4 L7 104.4" stroke="#b3b3b3" stroke-width="1.25"/><path d="M0 101.0 L7 108.0" stroke="#b3b3b3" stroke-width="1.25"/><path d="M0 104.60000000000001 L7 111.60000000000001" stroke="#b3b3b3" stroke-width="1.25"/><path d="M0 108.2 L7 115.2" stroke="#b3b3b3" stroke-width="1.25"/><path d="M0 111.8 L7 118.8" stroke="#b3b3b3" stroke-width="1.25"/><path d="M0 115.4 L7 122.4" stroke="#b3b3b3" stroke-width="1.25"/><path d="M0 119.0 L7 126.0" stroke="#b3b3b3" stroke-width="1.25"/><path d="M0 122.6 L7 129.6" stroke="#b3b3b3" stroke-width="1.25"/><path d="M0 126.20000000000002 L7 133.20000000000002" stroke="#b3b3b3" stroke-width="1.25"/><path d="M0 129.8 L7 136.8" stroke="#b3b3b3" stroke-width="1.25"/><path d="M0 133.4 L7 140.4" stroke="#b3b3b3" stroke-width="1.25"/><path d="M0 137.0 L7 144.0" stroke="#b3b3b3" stroke-width="1.25"/><path d="M0 140.6 L7 147.6" stroke="#b3b3b3" stroke-width="1.25"/><path d="M0 144.20000000000002 L7 151.20000000000002" stroke="#b3b3b3" stroke-width="1.25"/><path d="M0 147.8 L7 154.8" stroke="#b3b3b3" stroke-width="1.25"/><path d="M0 151.4 L7 158.4" stroke="#b3b3b3" stroke-width="1.25"/><path d="M0 155.0 L7 162.0" stroke="#b3b3b3" stroke-width="1.25"/><path d="M0 158.6 L7 165.6" stroke="#b3b3b3" stroke-width="1.25"/><path d="M0 162.20000000000002 L7 169.20000000000002" stroke="#b3b3b3" stroke-width="1.25"/><path d="M0 165.8 L7 172.8" stroke="#b3b3b3" stroke-width="1.25"/><path d="M0 169.4 L7 176.4" stroke="#b3b3b3" stroke-width="1.25"/><path d="M0 173.0 L7 180.0" stroke="#b3b3b3" stroke-width="1.25"/><path d="M0 176.6 L7 183.6" stroke="#b3b3b3" stroke-width="1.25"/><path d="M0 180.20000000000002 L7 187.20000000000002" stroke="#b3b3b3" stroke-width="1.25"/><path d="M0 183.8 L7 190.8" stroke="#b3b3b3" stroke-width="1.25"/><path d="M0 187.4 L7 194.4" stroke="#b3b3b3" stroke-width="1.25"/><path d="M0 191.0 L7 198.0" stroke="#b3b3b3" stroke-width="1.25"/><path d="M0 194.6 L7 201.6" stroke="#b3b3b3" stroke-width="1.25"/><path d="M0 198.20000000000002 L7 205.20000000000002" stroke="#b3b3b3" stroke-width="1.25"/><path d="M0 201.8 L7 208.8" stroke="#b3b3b3" stroke-width="1.25"/><path d="M0 205.4 L7 212.4" stroke="#b3b3b3" stroke-width="1.25"/><path d="M0 209.0 L7 216.0" stroke="#b3b3b3" stroke-width="1.25"/><path d="M0 212.6 L7 219.6" stroke="#b3b3b3" stroke-width="1.25"/><path d="M0 216.20000000000002 L7 223.20000000000002" stroke="#b3b3b3" stroke-width="1.25"/><path d="M0 219.8 L7 226.8" stroke="#b3b3b3" stroke-width="1.25"/><path d="M0 223.4 L7 230.4" stroke="#b3b3b3" stroke-width="1.25"/><path d="M0 227.0 L7 234.0" stroke="#b3b3b3" stroke-width="1.25"/><path d="M0 230.6 L7 237.6" stroke="#b3b3b3" stroke-width="1.25"/><path d="M0 234.20000000000002 L7 241.20000000000002" stroke="#b3b3b3" stroke-width="1.25"/><path d="M0 237.8 L7 244.8" stroke="#b3b3b3" stroke-width="1.25"/><path d="M0 241.4 L7 248.4" stroke="#b3b3b3" stroke-width="1.25"/><path d="M0 245.0 L7 252.0" stroke="#b3b3b3" stroke-width="1.25"/><path d="M0 248.6 L7 255.6" stroke="#b3b3b3" stroke-width="1.25"/><path d="M0 252.2 L7 259.2" stroke="#b3b3b3" stroke-width="1.25"/><path d="M0 255.8 L7 262.8" stroke="#b3b3b3" stroke-width="1.25"/><path d="M0 259.40000000000003 L7 266.40000000000003" stroke="#b3b3b3" stroke-width="1.25"/><path d="M0 263.0 L7 270.0" stroke="#b3b3b3" stroke-width="1.25"/><path d="M0 266.6 L7 273.6" stroke="#b3b3b3" stroke-width="1.25"/><path d="M0 270.2 L7 277.2" stroke="#b3b3b3" stroke-width="1.25"/><path d="M0 273.8 L7 280.8" stroke="#b3b3b3" stroke-width="1.25"/><path d="M0 277.40000000000003 L7 284.40000000000003" stroke="#b3b3b3" stroke-width="1.25"/><path d="M0 281.0 L7 288.0" stroke="#b3b3b3" stroke-width="1.25"/><path d="M0 284.6 L7 291.6" stroke="#b3b3b3" stroke-width="1.25"/><path d="M0 288.2 L7 295.2" stroke="#b3b3b3" stroke-width="1.25"/><path d="M0 291.8 L7 298.8" stroke="#b3b3b3" stroke-width="1.25"/><path d="M0 295.40000000000003 L7 302.40000000000003" stroke="#b3b3b3" stroke-width="1.25"/><path d="M0 299.0 L7 306.0" stroke="#b3b3b3" stroke-width="1.25"/><path d="M0 302.6 L7 309.6" stroke="#b3b3b3" stroke-width="1.25"/><path d="M0 306.2 L7 313.2" stroke="#b3b3b3" stroke-width="1.25"/><path d="M0 309.8 L7 316.8" stroke="#b3b3b3" stroke-width="1.25"/><path d="M0 313.40000000000003 L7 320.40000000000003" stroke="#b3b3b3" stroke-width="1.25"/><path d="M0 317.0 L7 324.0" stroke="#b3b3b3" stroke-width="1.25"/><path d="M0 320.6 L7 327.6" stroke="#b3b3b3" stroke-width="1.25"/><path d="M0 324.2 L7 331.2" stroke="#b3b3b3" stroke-width="1.25"/><path d="M0 327.8 L7 334.8" stroke="#b3b3b3" stroke-width="1.25"/><path d="M0 331.40000000000003 L7 338.40000000000003" stroke="#b3b3b3" stroke-width="1.25"/><path d="M0 335.0 L7 342.0" stroke="#b3b3b3" stroke-width="1.25"/><path d="M0 338.6 L7 345.6" stroke="#b3b3b3" stroke-width="1.25"/><path d="M0 342.2 L7 349.2" stroke="#b3b3b3" stroke-width="1.25"/><path d="M0 345.8 L7 352.8" stroke="#b3b3b3" stroke-width="1.25"/><path d="M0 349.40000000000003 L7 356.40000000000003" stroke="#b3b3b3" stroke-width="1.25"/><path d="M0 353.0 L7 360.0" stroke="#b3b3b3" stroke-width="1.25"/><path d="M0 356.6 L7 363.6" stroke="#b3b3b3" stroke-width="1.25"/><path d="M0 360.2 L7 367.2" stroke="#b3b3b3" stroke-width="1.25"/><path d="M0 363.8 L7 370.8" stroke="#b3b3b3" stroke-width="1.25"/><path d="M0 367.40000000000003 L7 374.40000000000003" stroke="#b3b3b3" stroke-width="1.25"/><path d="M0 371.0 L7 378.0" stroke="#b3b3b3" stroke-width="1.25"/><path d="M0 374.6 L7 381.6" stroke="#b3b3b3" stroke-width="1.25"/><path d="M0 378.2 L7 385.2" stroke="#b3b3b3" stroke-width="1.25"/><path d="M0 381.8 L7 388.8" stroke="#b3b3b3" stroke-width="1.25"/><path d="M0 385.40000000000003 L7 392.40000000000003" stroke="#b3b3b3" stroke-width="1.25"/><path d="M0 389.0 L7 396.0" stroke="#b3b3b3" stroke-width="1.25"/><path d="M0 392.6 L7 399.6" stroke="#b3b3b3" stroke-width="1.25"/><path d="M0 396.2 L7 403.2" stroke="#b3b3b3" stroke-width="1.25"/><path d="M0 399.8 L7 406.8" stroke="#b3b3b3" stroke-width="1.25"/><path d="M0 403.40000000000003 L7 410.40000000000003" stroke="#b3b3b3" stroke-width="1.25"/></svg></div>
<svg style="left:351px;top:140px" width="9" height="9" viewBox="0 0 9 9"><circle cx="4.5" cy="4.5" r="4.3" fill="#d8302b"/><rect x="3.8" y="1.6" width="1.5" height="4" fill="#fff"/><rect x="3.8" y="6.1" width="1.5" height="1.4" fill="#fff"/></svg>
<svg style="left:387px;top:137px" width="451" height="25" viewBox="0 0 451 25"><rect x="2.40" y="0" width="1" height="25" fill="#e8e8e8"/><rect x="10.71" y="0" width="0.8" height="25" fill="#f7f7f7"/><rect x="19.02" y="0" width="0.8" height="25" fill="#f7f7f7"/><rect x="27.33" y="0" width="0.8" height="25" fill="#f7f7f7"/><rect x="35.64" y="0" width="1" height="25" fill="#e8e8e8"/><rect x="43.95" y="0" width="0.8" height="25" fill="#f7f7f7"/><rect x="52.26" y="0" width="0.8" height="25" fill="#f7f7f7"/><rect x="60.57" y="0" width="0.8" height="25" fill="#f7f7f7"/><rect x="68.88" y="0" width="1" height="25" fill="#e8e8e8"/><rect x="77.19" y="0" width="0.8" height="25" fill="#f7f7f7"/><rect x="85.50" y="0" width="0.8" height="25" fill="#f7f7f7"/><rect x="93.81" y="0" width="0.8" height="25" fill="#f7f7f7"/><rect x="102.12" y="0" width="1" height="25" fill="#e8e8e8"/><rect x="110.43" y="0" width="0.8" height="25" fill="#f7f7f7"/><rect x="118.74" y="0" width="0.8" height="25" fill="#f7f7f7"/><rect x="127.05" y="0" width="0.8" height="25" fill="#f7f7f7"/><rect x="135.36" y="0" width="1" height="25" fill="#e8e8e8"/><rect x="143.67" y="0" width="0.8" height="25" fill="#f7f7f7"/><rect x="151.98" y="0" width="0.8" height="25" fill="#f7f7f7"/><rect x="160.29" y="0" width="0.8" height="25" fill="#f7f7f7"/><rect x="168.60" y="0" width="1" height="25" fill="#e8e8e8"/><rect x="176.91" y="0" width="0.8" height="25" fill="#f7f7f7"/><rect x="185.22" y="0" width="0.8" height="25" fill="#f7f7f7"/><rect x="193.53" y="0" width="0.8" height="25" fill="#f7f7f7"/><rect x="201.84" y="0" width="1" height="25" fill="#e8e8e8"/><rect x="210.15" y="0" width="0.8" height="25" fill="#f7f7f7"/><rect x="218.46" y="0" width="0.8" height="25" fill="#f7f7f7"/><rect x="226.77" y="0" width="0.8" height="25" fill="#f7f7f7"/><rect x="235.08" y="0" width="1" height="25" fill="#e8e8e8"/><rect x="243.39" y="0" width="0.8" height="25" fill="#f7f7f7"/><rect x="251.70" y="0" width="0.8" height="25" fill="#f7f7f7"/><rect x="260.01" y="0" width="0.8" height="25" fill="#f7f7f7"/><rect x="268.32" y="0" width="1" height="25" fill="#e8e8e8"/><rect x="276.63" y="0" width="0.8" height="25" fill="#f7f7f7"/><rect x="284.94" y="0" width="0.8" height="25" fill="#f7f7f7"/><rect x="293.25" y="0" width="0.8" height="25" fill="#f7f7f7"/><rect x="301.56" y="0" width="1" height="25" fill="#e8e8e8"/><rect x="309.87" y="0" width="0.8" height="25" fill="#f7f7f7"/><rect x="318.18" y="0" width="0.8" height="25" fill="#f7f7f7"/><rect x="326.49" y="0" width="0.8" height="25" fill="#f7f7f7"/><rect x="334.80" y="0" width="1" height="25" fill="#e8e8e8"/><rect x="343.11" y="0" width="0.8" height="25" fill="#f7f7f7"/><rect x="351.42" y="0" width="0.8" height="25" fill="#f7f7f7"/><rect x="359.73" y="0" width="0.8" height="25" fill="#f7f7f7"/><rect x="368.04" y="0" width="1" height="25" fill="#e8e8e8"/><rect x="376.35" y="0" width="0.8" height="25" fill="#f7f7f7"/><rect x="384.66" y="0" width="0.8" height="25" fill="#f7f7f7"/><rect x="392.97" y="0" width="0.8" height="25" fill="#f7f7f7"/><rect x="401.28" y="0" width="1" height="25" fill="#e8e8e8"/><rect x="409.59" y="0" width="0.8" height="25" fill="#f7f7f7"/><rect x="417.90" y="0" width="0.8" height="25" fill="#f7f7f7"/><rect x="426.21" y="0" width="0.8" height="25" fill="#f7f7f7"/><rect x="434.52" y="0" width="1" height="25" fill="#e8e8e8"/><rect x="442.83" y="0" width="0.8" height="25" fill="#f7f7f7"/><rect x="451.14" y="0" width="0.8" height="25" fill="#f7f7f7"/><rect x="0" y="7.20" width="451" height="0.8" fill="#f7f7f7"/><rect x="0" y="15.50" width="451" height="0.8" fill="#f7f7f7"/><rect x="0" y="24.30" width="451" height="1" fill="#e8e8e8"/></svg>
<div class="a" style="left:342px;top:137px;width:639px;height:1px;background:#a8a8a8;"></div>
<div class="t" style="left:386.60px;top:200.43px;font-size:13.5px;color:#3d3d3d;font-family:'Liberation Sans',sans-serif;font-weight:bold;transform:scaleX(0.984);transform-origin:0 0;">3. Problem: Mesh Circuit (simscape)</div>
<div class="t" style="left:386.60px;top:218.72px;font-size:9.5px;color:#1e1e1e;font-family:'Liberation Sans',sans-serif;transform:scaleX(0.982);transform-origin:0 0;">Implement the 4 resistor mesh circuit using simscape following the in class instructions. Important, use the "Display" element from the</div>
<div class="t" style="left:386.60px;top:232.32px;font-size:9.5px;color:#1e1e1e;font-family:'Liberation Sans',sans-serif;transform:scaleX(0.982);transform-origin:0 0;">"Sinks" section to show the measurement of currents I1 and I2 instead of the "Scope".</div>
<div class="a" style="left:981.4px;top:138px;width:11px;height:394px;background:#f0f0f0;"></div>
<svg style="left:983.5px;top:141.5px" width="7" height="4" viewBox="0 0 7 4"><path d="M0 4 L3.5 0 L7 4 Z" fill="#555"/></svg>
<svg style="left:983.5px;top:524px" width="7" height="4" viewBox="0 0 7 4"><path d="M0 0 H7 L3.5 4 Z" fill="#555"/></svg>
<div class="a" style="left:982px;top:373px;width:9px;height:94px;background:#a6a6a6;"></div>
<div class="a" style="left:992.3px;top:138px;width:17.7px;height:394px;background:#efefef;"></div>
<div class="a" style="left:992.3px;top:138px;width:0.9px;height:394px;background:#d2d2d2;"></div>
<svg style="left:997px;top:142.4px" width="11" height="11" viewBox="0 0 11 11"><rect x="0.5" y="0.5" width="9.5" height="10" fill="#fafafa" stroke="#9a9a9a" stroke-width="0.7"/><rect x="2" y="2" width="4" height="1" fill="#e8906a"/><rect x="2" y="4" width="6" height="0.8" fill="#777"/><rect x="2.5" y="6" width="5.5" height="2.5" fill="#4bb0d8"/><rect x="4" y="7" width="3.5" height="1.8" fill="#e6d23a"/></svg>
<div class="a" style="left:994px;top:156px;width:15px;height:13.5px;border:1px solid #bdbdbd;border-radius:3px;background:#e6e6e6"></div>
<svg style="left:997px;top:157.5px" width="11" height="11" viewBox="0 0 11 11"><rect x="0.5" y="0.5" width="9.5" height="10" fill="#fafafa" stroke="#9a9a9a" stroke-width="0.7"/><rect x="2" y="2" width="4" height="1" fill="#e8906a"/><rect x="2" y="4" width="6" height="0.8" fill="#777"/><rect x="2.5" y="6" width="5.5" height="2.5" fill="#4bb0d8"/><rect x="4" y="7" width="3.5" height="1.8" fill="#e6d23a"/></svg>
<svg style="left:997px;top:174.4px" width="11" height="11" viewBox="0 0 11 11"><rect x="0.5" y="0.5" width="9.5" height="10" fill="#fafafa" stroke="#9a9a9a" stroke-width="0.7"/><rect x="2" y="2" width="4" height="1" fill="#e8906a"/><rect x="2" y="4" width="6" height="0.8" fill="#777"/><rect x="2.5" y="6" width="5.5" height="2.5" fill="#4bb0d8"/><rect x="4" y="7" width="3.5" height="1.8" fill="#e6d23a"/></svg>
<div class="a" style="left:993px;top:190px;width:17px;height:0.8px;background:#dedede;"></div>
<svg style="left:996px;top:193px" width="10" height="10" viewBox="0 0 10 10"><path d="M5 0.5 L9.6 9.3 H0.4 Z" fill="#f5a000" stroke="#f5a000" stroke-width="0.8" stroke-linejoin="round"/><rect x="4.4" y="3" width="1.3" height="3.5" fill="#fff"/><rect x="4.4" y="7.2" width="1.3" height="1.2" fill="#fff"/></svg>
<div class="a" style="left:996px;top:238.3px;width:10px;height:2px;background:#95a5a5;"></div>
<div class="a" style="left:996px;top:246.3px;width:10px;height:2px;background:#95a5a5;"></div>
<div class="a" style="left:1011.2px;top:110px;width:12.8px;height:423px;background:#f0f0f0;"></div>
<div class="a" style="left:1011.2px;top:110px;width:12.8px;height:45px;background:#fbfbfb;border-bottom:1px solid #cfcfcf;border-right:1px solid #dcdcdc"></div>
<div class="t" style="left:1020.5px;top:114px;font-size:7.6px;color:#111;font-weight:bold;letter-spacing:-0.3px;transform:rotate(90deg);transform-origin:0 0;font-family:'Liberation Sans',sans-serif">Live Editor</div>
<!-- sec_circuit -->
<svg style="left:0;top:0" width="1024" height="576" viewBox="0 0 1024 576"><path d="M484.8 340.2 V297 Q484.8 294.8 487 294.8 H538" stroke="#4775d1" stroke-width="1.15" fill="none" stroke-linejoin="round"/><path d="M538.00 294.80 L539.31 292.20 L541.94 297.40 L544.56 292.20 L547.19 297.40 L549.81 292.20 L552.44 297.40 L555.06 292.20 L557.69 297.40 L559.00 294.80" stroke="#4775d1" stroke-width="1.15" fill="none" stroke-linejoin="round"/><path d="M559 294.8 H661.7" stroke="#4775d1" stroke-width="1.15" fill="none" stroke-linejoin="round"/><path d="M661.70 294.80 L662.93 292.20 L665.38 297.40 L667.83 292.20 L670.28 297.40 L672.73 292.20 L675.18 297.40 L677.63 292.20 L680.08 297.40 L681.30 294.80" stroke="#4775d1" stroke-width="1.15" fill="none" stroke-linejoin="round"/><path d="M681.3 294.8 H728.8 Q731 294.8 731 297 V331.3" stroke="#4775d1" stroke-width="1.15" fill="none" stroke-linejoin="round"/><path d="M731.00 331.30 L728.40 332.52 L733.60 334.96 L728.40 337.39 L733.60 339.83 L728.40 342.27 L733.60 344.71 L728.40 347.14 L733.60 349.58 L731.00 350.80" stroke="#4775d1" stroke-width="1.15" fill="none" stroke-linejoin="round"/><path d="M731 350.8 V402.3 Q731 404.5 728.8 404.5 H672.5" stroke="#4775d1" stroke-width="1.15" fill="none" stroke-linejoin="round"/><path d="M608.3 294.8 V331.6" stroke="#4775d1" stroke-width="1.15" fill="none" stroke-linejoin="round"/><path d="M608.30 331.60 L605.70 332.81 L610.90 335.24 L605.70 337.66 L610.90 340.09 L605.70 342.51 L610.90 344.94 L605.70 347.36 L610.90 349.79 L608.30 351.00" stroke="#4775d1" stroke-width="1.15" fill="none" stroke-linejoin="round"/><path d="M608.3 351 V411" stroke="#4775d1" stroke-width="1.15" fill="none" stroke-linejoin="round"/><path d="M484.8 355.2 V440.2" stroke="#4775d1" stroke-width="1.15" fill="none" stroke-linejoin="round"/><path d="M478 440.3 H491.3 M480.3 442.7 H489.2 M482.2 445 H487.3 M483.8 447.3 H485.8" stroke="#4775d1" stroke-width="1"/><circle cx="484.6" cy="347.7" r="7.3" stroke="#4775d1" stroke-width="1.15" fill="none"/><path d="M482.8 344.4 H486.4 M484.6 342.6 V346.2 M482.8 352.4 H486.4" stroke="#4775d1" stroke-width="0.9"/><path d="M444.5 418 H537.5 V410.8 H540.8" stroke="#4775d1" stroke-width="1.15" fill="none" stroke-linejoin="round"/><path d="M555.8 410.8 H655 V404.5 H657.5" stroke="#4775d1" stroke-width="1.15" fill="none" stroke-linejoin="round"/><circle cx="608.3" cy="294.8" r="1.9" fill="#4775d1"/><circle cx="484.8" cy="418" r="1.9" fill="#4775d1"/><circle cx="608.3" cy="410.9" r="1.9" fill="#4775d1"/><rect x="534.4" y="397.3" width="27.1" height="27.1" stroke="#4775d1" stroke-width="1.1" fill="none"/><circle cx="548.3" cy="410.8" r="7.4" stroke="#4775d1" stroke-width="1.1" fill="#fff"/><text x="548.3" y="414.1" font-size="9.5" font-weight="bold" text-anchor="middle" fill="#4775d1" font-family="Liberation Sans">A</text><path d="M536.4 402.8 V406.3" stroke="#7a9a7a" stroke-width="0.8"/><path d="M557.0 407.3 H560.0 M558.5 405.8 V408.8" stroke="#7a9a7a" stroke-width="0.7"/><rect x="650.8" y="390.9" width="26.8" height="27.1" stroke="#4775d1" stroke-width="1.1" fill="none"/><circle cx="665" cy="404.5" r="7.4" stroke="#4775d1" stroke-width="1.1" fill="#fff"/><text x="665" y="407.8" font-size="9.5" font-weight="bold" text-anchor="middle" fill="#4775d1" font-family="Liberation Sans">A</text><path d="M652.8 396.5 V400.0" stroke="#7a9a7a" stroke-width="0.8"/><path d="M673.1 401.0 H676.1 M674.6 399.5 V402.5" stroke="#7a9a7a" stroke-width="0.7"/><path d="M534.4 404.7 H509.8 Q508.3 404.7 508.3 403.2 V362.5 Q508.3 361 509.8 361 H512.5" stroke="#b98080" stroke-width="1" fill="none"/><path d="M512.5 358.8 L516.8 361 L512.5 363.2 Z" stroke="#8a8a8a" stroke-width="0.7" fill="#fff"/><path d="M517.8 358.4 L522.5 361 L517.8 363.6 Z" fill="#111"/><path d="M522.5 361 H533.3" stroke="#111" stroke-width="0.7"/><path d="M532.8 358.4 L537.3 361 L532.8 363.6 Z" fill="#111"/><rect x="538.9" y="353.1" width="60.4" height="19.9" fill="#9a9a9a" opacity="0.55"/><rect x="537.3" y="351.5" width="60.4" height="19.9" fill="#fff" stroke="#333" stroke-width="1"/><rect x="539.4" y="353.5" width="52.2" height="9.9" fill="#fff" stroke="#222" stroke-width="0.9"/><text x="591.1" y="362.5" font-size="8.5" text-anchor="end" fill="#222" font-family="Liberation Sans">6</text><path d="M650.8 398.5 H633.3 Q631.8 398.5 631.8 397.0 V362.8 Q631.8 361.3 633.3 361.3 H636.0" stroke="#b98080" stroke-width="1" fill="none"/><path d="M636.0 359.1 L640.3 361.3 L636.0 363.5 Z" stroke="#8a8a8a" stroke-width="0.7" fill="#fff"/><path d="M641.3 358.7 L646.0 361.3 L641.3 363.90000000000003 Z" fill="#111"/><path d="M646.0 361.3 H653.3" stroke="#111" stroke-width="0.7"/><path d="M652.8 358.7 L657.3 361.3 L652.8 363.90000000000003 Z" fill="#111"/><rect x="658.9" y="352.40000000000003" width="60.4" height="20.3" fill="#9a9a9a" opacity="0.55"/><rect x="657.3" y="350.8" width="60.4" height="20.3" fill="#fff" stroke="#333" stroke-width="1"/><rect x="659.4" y="352.8" width="52.2" height="9.9" fill="#fff" stroke="#222" stroke-width="0.9"/><text x="711.1" y="361.8" font-size="8.5" text-anchor="end" fill="#222" font-family="Liberation Sans">3</text><rect x="415.8" y="408.8" width="30.2" height="21.5" fill="#9a9a9a" opacity="0.55"/><rect x="414.3" y="407.3" width="30.2" height="21.5" fill="#fff" stroke="#333" stroke-width="1"/><text x="429.4" y="420.8" font-size="8" text-anchor="middle" fill="#333" font-family="Liberation Sans">f(x) = 0</text><rect x="444.5" y="417" width="1.5" height="2" fill="#222"/><path d="M536.3 291 H539.7 M538 289.3 V292.7" stroke="#5a6b63" stroke-width="0.65"/><path d="M660.0 291 H663.4000000000001 M661.7 289.3 V292.7" stroke="#5a6b63" stroke-width="0.65"/><path d="M610.8 331 H614.2 M612.5 329.3 V332.7" stroke="#5a6b63" stroke-width="0.65"/><path d="M733.3 331 H736.7 M735 329.3 V332.7" stroke="#5a6b63" stroke-width="0.65"/><path d="M558.7 290 H560.3" stroke="#5a6b63" stroke-width="0.7"/><path d="M682.2 290 H683.8" stroke="#5a6b63" stroke-width="0.7"/><path d="M611.7 352.5 H613.3" stroke="#5a6b63" stroke-width="0.7"/><path d="M734.2 352.5 H735.8" stroke="#5a6b63" stroke-width="0.7"/></svg>
<!-- sec_bottom -->
<div class="a" style="left:0px;top:533.2px;width:1024px;height:16px;background:#f0f0f0;"></div>
<div class="a" style="left:0px;top:533.5px;width:1024px;height:0.8px;background:#f7f7f7;"></div>
<div class="a" style="left:661px;top:535px;width:75px;height:14px;border-left:1px solid #d4d4d4;border-top:1px solid #d9d9d9"></div>
<div class="a" style="left:737.2px;top:535px;width:23.799999999999955px;height:14px;border-left:1px solid #d4d4d4;border-top:1px solid #d9d9d9"></div>
<div class="a" style="left:762.2px;top:535px;width:162.79999999999995px;height:14px;border-left:1px solid #d4d4d4;border-top:1px solid #d9d9d9"></div>
<div class="a" style="left:925.4px;top:535px;width:88.60000000000002px;height:14px;border-left:1px solid #d4d4d4;border-top:1px solid #d9d9d9"></div>
<div class="t" style="left:664.00px;top:539.40px;font-size:8px;color:#222;font-family:'Liberation Sans',sans-serif;transform:scaleX(0.883);transform-origin:0 0;">UTF-8</div>
<div class="t" style="left:740.00px;top:539.40px;font-size:8px;color:#222;font-family:'Liberation Sans',sans-serif;transform:scaleX(0.750);transform-origin:0 0;">LF</div>
<div class="t" style="left:765.00px;top:539.40px;font-size:8px;color:#222;font-family:'Liberation Sans',sans-serif;transform:scaleX(0.994);transform-origin:0 0;">script</div>
<div class="t" style="left:928.00px;top:539.40px;font-size:8px;color:#222;font-family:'Liberation Sans',sans-serif;transform:scaleX(1.012);transform-origin:0 0;">Ln</div>
<div class="t" style="left:944.00px;top:539.40px;font-size:8px;color:#222;font-family:'Liberation Sans',sans-serif;transform:scaleX(0.899);transform-origin:0 0;">2</div>
<div class="t" style="left:974.00px;top:539.40px;font-size:8px;color:#222;font-family:'Liberation Sans',sans-serif;transform:scaleX(1.041);transform-origin:0 0;">Col</div>
<div class="t" style="left:993.00px;top:539.40px;font-size:8px;color:#222;font-family:'Liberation Sans',sans-serif;transform:scaleX(0.899);transform-origin:0 0;">3</div>
<svg style="left:1015px;top:541px" width="8" height="8" viewBox="0 0 8 8"><circle cx="7" cy="1" r="0.6" fill="#aaa"/><circle cx="7" cy="4" r="0.6" fill="#aaa"/><circle cx="4" cy="4" r="0.6" fill="#aaa"/><circle cx="7" cy="7" r="0.6" fill="#aaa"/><circle cx="4" cy="7" r="0.6" fill="#aaa"/><circle cx="1" cy="7" r="0.6" fill="#aaa"/></svg>
<div class="a" style="left:0px;top:549.2px;width:1024px;height:26.8px;background:#1e1e1e;"></div>
<svg style="left:11px;top:556.5px" width="11" height="11" viewBox="0 0 11 11"><path d="M0 1.6 L4.8 0.9 V5.2 H0 Z M5.5 0.8 L11 0 V5.2 H5.5 Z M0 5.9 H4.8 V10.2 L0 9.5 Z M5.5 5.9 H11 V11 L5.5 10.3 Z" fill="#fff"/></svg>
<div class="a" style="left:32px;top:549.2px;width:229px;height:26.8px;background:#f1f1f1;"></div>
<div class="a" style="left:32px;top:549px;width:229px;height:1px;background:#cdcdcd;"></div>
<svg style="left:40px;top:557px" width="11" height="11" viewBox="0 0 11 11"><circle cx="6.8" cy="4.2" r="3.3" fill="none" stroke="#111" stroke-width="1"/><path d="M4.5 6.5 L0.8 10.2" stroke="#111" stroke-width="1.1"/></svg>
<div class="t" style="left:59.00px;top:558.02px;font-size:9.5px;color:#1a1a1a;font-family:'Liberation Sans',sans-serif;transform:scaleX(1.036);transform-origin:0 0;">Type here to search</div>
<svg style="left:271.5px;top:557px" width="11" height="11" viewBox="0 0 11 11"><circle cx="5.5" cy="5.5" r="4.3" fill="none" stroke="#fff" stroke-width="1.3"/></svg>
<svg style="left:302.5px;top:556px" width="13" height="13" viewBox="0 0 13 13"><rect x="0.7" y="2.5" width="7" height="8" fill="none" stroke="#fff" stroke-width="1"/><path d="M0.7 5 H7.7 M0.7 8 H7.7" stroke="#fff" stroke-width="0.8"/><path d="M11 1 V12 M9.5 6.5 H12.5" stroke="#fff" stroke-width="0.9"/></svg>
<svg style="left:335px;top:555px" width="16" height="16" viewBox="0 0 16 16"><path d="M5 3.5 V2 Q5 0.8 6.5 0.8 H9.5 Q11 0.8 11 2 V3.5" stroke="#ddd" stroke-width="1" fill="none"/><rect x="0.5" y="3.5" width="15" height="12" rx="1" fill="#f2f2f2"/><rect x="5" y="7" width="2.8" height="2.8" fill="#f25022"/><rect x="8.2" y="7" width="2.8" height="2.8" fill="#7fba00"/><rect x="5" y="10.2" width="2.8" height="2.8" fill="#00a4ef"/><rect x="8.2" y="10.2" width="2.8" height="2.8" fill="#ffb900"/></svg>
<svg style="left:368px;top:554.5px" width="17" height="17" viewBox="0 0 17 17"><defs><linearGradient id="eg" x1="0" y1="0" x2="1" y2="1"><stop offset="0" stop-color="#35c1f1"/><stop offset="0.6" stop-color="#1b7fd6"/><stop offset="1" stop-color="#0b5cb0"/></linearGradient></defs><circle cx="8.5" cy="8.5" r="8" fill="url(#eg)"/><path d="M9 0.6 Q15.5 1.2 16.4 8 Q16.5 10.8 13.5 10.8 H6.8 Q6.8 7.2 10 7 Q13 7 13.5 9 Q14 4 9 0.6 Z" fill="#5fd35f"/><path d="M6.5 10.5 Q6.5 6 10 6 Q5 4.5 3 9 Q2 13.5 6 15.5 Q9 16.8 12 15.5 Q7.5 15 6.5 10.5 Z" fill="#0a4d9a"/></svg>
<svg style="left:401.5px;top:555.5px" width="17" height="15" viewBox="0 0 17 15"><path d="M0.5 0.5 H6 L7.5 2 H16.5 V14.5 H0.5 Z" fill="#d9a21f"/><rect x="0.5" y="3.5" width="16" height="11" fill="#f6cf55"/><path d="M4 14.5 V9 H13 V14.5 H11 V11 H6 V14.5 Z" fill="#1f7fd0"/></svg>
<div class="a" style="left:396px;top:574px;width:27px;height:2px;background:#7ab8e8;"></div>
<svg style="left:434.5px;top:554.5px" width="17" height="17" viewBox="0 0 17 17"><circle cx="8.5" cy="8.5" r="8" fill="#e95420"/><circle cx="8.5" cy="8.5" r="4" fill="none" stroke="#fff" stroke-width="1.5"/><circle cx="4" cy="8.5" r="1.6" fill="#fff" stroke="#e95420" stroke-width="0.6"/><circle cx="10.8" cy="4.6" r="1.6" fill="#fff" stroke="#e95420" stroke-width="0.6"/><circle cx="10.8" cy="12.4" r="1.6" fill="#fff" stroke="#e95420" stroke-width="0.6"/></svg>
<svg style="left:469px;top:554.5px" width="12" height="17" viewBox="0 0 12 17"><path d="M8.5 0.5 L11 1.5 L6 7.5 L10.5 9 L3.5 16.5 L1 15.5 L5.5 10 L1.5 8.5 Z" fill="#f2f2f2"/><path d="M6 7.5 L10.5 9 L9.5 10 L5 8.5 Z" fill="#1e1e1e"/></svg>
<svg style="left:500px;top:554.5px" width="17" height="17" viewBox="0 0 17 17"><defs><radialGradient id="fg" cx="0.5" cy="0.7" r="0.7"><stop offset="0" stop-color="#ff9a1f"/><stop offset="0.7" stop-color="#ff5a2a"/><stop offset="1" stop-color="#e0226e"/></radialGradient></defs><circle cx="8.5" cy="9" r="7.5" fill="url(#fg)"/><circle cx="9" cy="9" r="3.9" fill="#6a3ed8"/><path d="M1.5 7 Q2.5 2.5 6 1.8 Q5 4.5 6.5 6 Q3.5 6.5 4 10 Q2 9.5 1.5 7 Z" fill="#ffd43b"/><path d="M10 0.5 Q14.5 2 15.5 6 Q13.5 3.5 11 4 Z" fill="#ffbd2f"/></svg>
<div class="a" style="left:495.5px;top:574px;width:27.3px;height:2px;background:#7ab8e8;"></div>
<svg style="left:534px;top:555px" width="16" height="15" viewBox="0 0 16 15"><path d="M4 0.5 L8 3 L4 5.5 L0 3 Z M12 0.5 L16 3 L12 5.5 L8 3 Z M0 8 L4 5.5 L8 8 L4 10.5 Z M8 8 L12 5.5 L16 8 L12 10.5 Z M4 11.5 L8 9 L12 11.5 L8 14 Z" fill="#fff"/></svg>
<svg style="left:567px;top:555.5px" width="17" height="15" viewBox="0 0 17 15"><path d="M0.5 5 L8.5 0.5 L16.5 5 V14.5 H0.5 Z" fill="#1478d2"/><path d="M2.5 4 H14.5 V9 L8.5 12 L2.5 9 Z" fill="#fff"/><path d="M0.5 5.5 L8.5 10.5 L16.5 5.5 V14.5 H0.5 Z" fill="#35a4ee"/><path d="M0.5 14.5 L16.5 5.5 V14.5 Z" fill="#1a8be0"/></svg>
<svg style="left:599.5px;top:554.5px" width="17" height="17" viewBox="0 0 17 17"><circle cx="8.5" cy="8.5" r="7.8" fill="#0a8fd8"/><text x="8.5" y="12.5" font-size="11" font-weight="bold" text-anchor="middle" fill="#fff" font-family="Liberation Sans">S</text></svg>
<svg style="left:632.5px;top:554.5px" width="17" height="17" viewBox="0 0 17 17"><rect x="0.5" y="0.5" width="16" height="16" rx="5" fill="#2d8cff"/><rect x="3.5" y="5.5" width="7" height="6" rx="1" fill="#fff"/><path d="M11 7.5 L14 5.5 V11.5 L11 9.5 Z" fill="#fff"/></svg>
<svg style="left:667px;top:554.5px" width="14" height="17" viewBox="0 0 14 17"><path d="M1 3.5 L9 0.5 L13 2 V15 L9 16.5 L1 13.5 L9 14.5 V2.5 L4 4 V12 L1 13.5 Z" fill="#e3411b"/><path d="M1 3.5 L4 4 V12 L1 13.5 Z" fill="#c7282a"/></svg>
<div class="a" style="left:691.4px;top:549.2px;width:32.4px;height:26.8px;background:#3d3d3d;"></div>
<div class="a" style="left:691.4px;top:574px;width:32.4px;height:2px;background:#7ab8e8;"></div>
<svg style="left:699px;top:555px" width="17" height="15" viewBox="0 0 17 15"><defs><linearGradient id="mg" x1="0" y1="0" x2="1" y2="1"><stop offset="0" stop-color="#f5a524"/><stop offset="1" stop-color="#c8341e"/></linearGradient></defs><path d="M0.5 8.5 L5 6.8 L8 4 L10.5 0.5 L16.5 13.5 L14 11.5 L10 14.5 L7 10.5 Z" fill="url(#mg)"/><path d="M0.5 8.5 L5 6.8 L7.5 9.3 L6 10.3 Z" fill="#4a9ee0"/><path d="M5 6.8 L8 4 L7.5 9.3 Z" fill="#2a6fb8"/></svg>
<svg style="left:732.5px;top:555px" width="16" height="16" viewBox="0 0 16 16"><rect x="0.5" y="0.5" width="15" height="15" rx="1.5" fill="#2b8ce6"/><path d="M0.5 15.5 V10 L5.5 6 L15.5 13 V15.5 Z" fill="#0a3f8a"/><path d="M6 15.5 L11 10 L15.5 13.5 V15.5 Z" fill="#5a8fdf"/><circle cx="11" cy="4" r="1.7" fill="#fff"/></svg>
<div class="a" style="left:727px;top:574px;width:27px;height:2px;background:#7ab8e8;"></div>
<svg style="left:790px;top:555.5px" width="16" height="15" viewBox="0 0 16 15"><circle cx="7" cy="7" r="6.5" fill="#fff"/><circle cx="7" cy="7" r="5.4" fill="#1b90d8"/><text x="7" y="10.3" font-size="9" font-weight="bold" text-anchor="middle" fill="#fff" font-family="Liberation Sans">?</text><circle cx="12" cy="11" r="3" fill="#1b90d8" stroke="#1e1e1e" stroke-width="0.8"/><rect x="11.5" y="10" width="1" height="2.6" fill="#fff"/></svg>
<svg style="left:826px;top:556px" width="14" height="13" viewBox="0 0 14 13"><path d="M9 0.5 Q13.5 2 13.5 7 Q13 12.5 7 12.5 Q2.5 12.5 0.5 9 Q6 10 8.5 6.5 Q10 3.5 9 0.5 Z" fill="#f8c400"/><path d="M1.5 5 Q1.5 3 3.5 3 Q4 1.5 5.5 2 Q7 2.5 6.8 4 Q7.5 4.5 7 5.5 H2 Z" fill="#a8c8e8"/></svg>
<div class="t" style="left:845.80px;top:559.35px;font-size:9px;color:#fff;font-family:'Liberation Sans',sans-serif;transform:scaleX(0.979);transform-origin:0 0;">67°F</div>
<svg style="left:877.5px;top:559.5px" width="10" height="6" viewBox="0 0 10 6"><path d="M0.5 5.5 L5 1 L9.5 5.5" stroke="#fff" stroke-width="1" fill="none"/></svg>
<svg style="left:900.5px;top:557px" width="12" height="11" viewBox="0 0 12 11"><circle cx="3" cy="8" r="2" fill="none" stroke="#fff" stroke-width="1"/><circle cx="6.5" cy="5" r="2" fill="none" stroke="#fff" stroke-width="1"/><circle cx="9.5" cy="2.5" r="1.8" fill="none" stroke="#fff" stroke-width="1"/><path d="M1 10.5 L11 0.5" stroke="#fff" stroke-width="0.8"/></svg>
<div class="t" style="left:924.60px;top:559.70px;font-size:8px;color:#fff;font-family:'Liberation Sans',sans-serif;transform:scaleX(0.877);transform-origin:0 0;">ENG</div>
<div class="t" style="left:950.70px;top:553.30px;font-size:8px;color:#fff;font-family:'Liberation Sans',sans-serif;transform:scaleX(0.951);transform-origin:0 0;">11:28 PM</div>
<div class="t" style="left:948.40px;top:565.10px;font-size:8px;color:#fff;font-family:'Liberation Sans',sans-serif;transform:scaleX(1.026);transform-origin:0 0;">9/11/2021</div>
<svg style="left:996.5px;top:556.5px" width="17" height="15" viewBox="0 0 17 15"><path d="M0.5 0.5 H12.5 V9.5 H5 L2.5 12 V9.5 H0.5 Z" fill="#f4f4f4"/><path d="M2.5 3 H10.5 M2.5 5 H10.5 M2.5 7 H8" stroke="#1e1e1e" stroke-width="0.7"/><circle cx="11.5" cy="10.5" r="4" fill="#1e1e1e" stroke="#fff" stroke-width="0.8"/><text x="11.5" y="13.2" font-size="7" font-weight="bold" text-anchor="middle" fill="#fff" font-family="Liberation Sans">2</text></svg>
</body></html>
